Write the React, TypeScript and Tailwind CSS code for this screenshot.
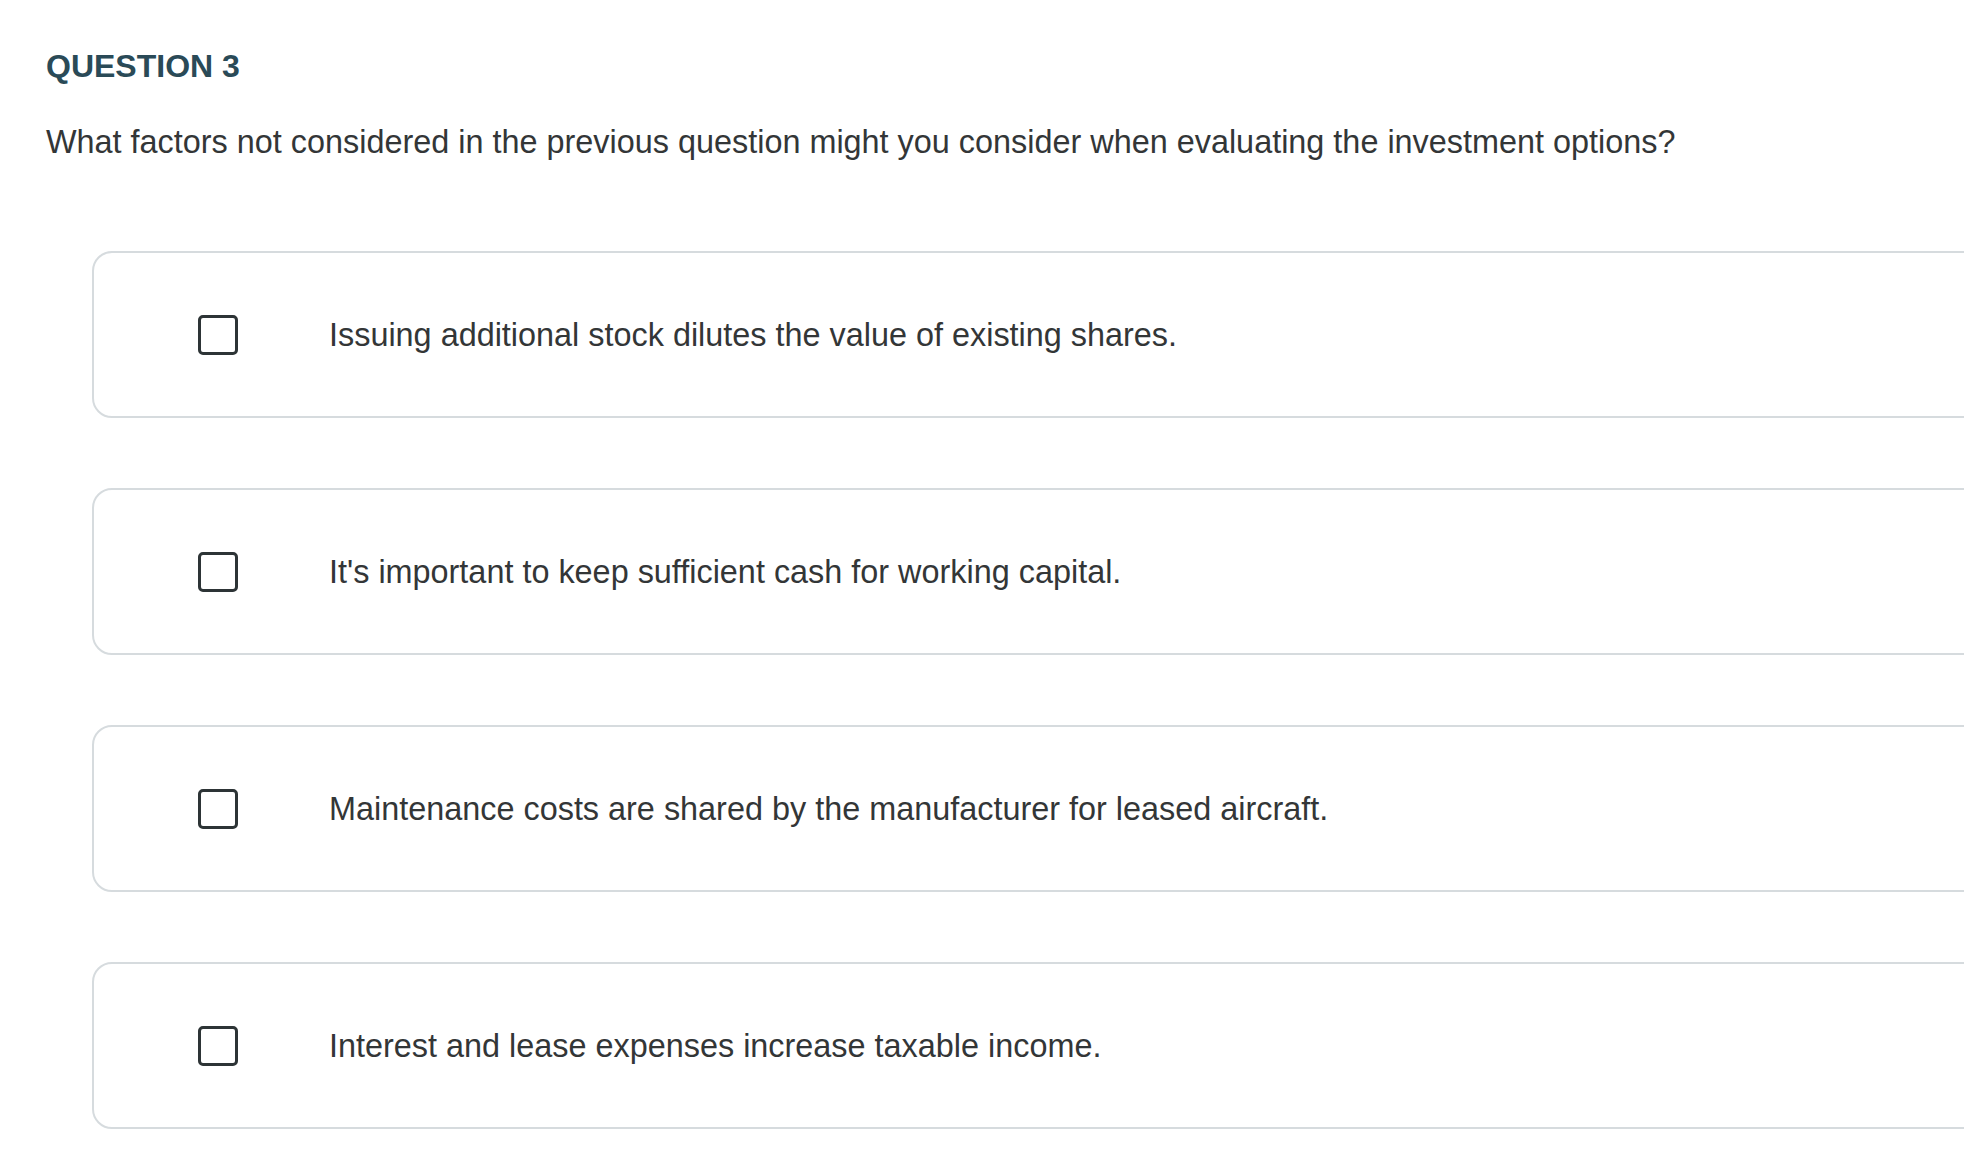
import React from "react";

const options: string[] = [
  "Issuing additional stock dilutes the value of existing shares.",
  "It's important to keep sufficient cash for working capital.",
  "Maintenance costs are shared by the manufacturer for leased aircraft.",
  "Interest and lease expenses increase taxable income.",
];

const App: React.FC = () => {
  return (
    <div
      className="h-screen w-full overflow-hidden bg-white px-[46px] pt-[48px]"
      style={{ fontFamily: '"Liberation Sans", Arial, Helvetica, sans-serif' }}
    >
      <h2 className="text-[32px] leading-[36px] font-bold text-[#2a4a57]">
        QUESTION 3
      </h2>
      <p className="mt-[40px] text-[32.4px] leading-[36px] text-[#333637] whitespace-nowrap">
        What factors not considered in the previous question might you consider
        when evaluating the investment options?
      </p>

      <div className="mt-[91px] ml-[46px] flex flex-col gap-[70px]">
        {options.map((text, i) => (
          <label
            key={i}
            className="flex h-[167px] w-[1900px] shrink-0 items-center rounded-[20px] border-2 border-[#d6dbde] bg-white pl-[104px]"
          >
            <span className="h-[40px] w-[40px] shrink-0 rounded-[5px] border-[3px] border-[#2d3436]" />
            <span className="ml-[91px] text-[32.4px] leading-[36px] text-[#333637] whitespace-nowrap">
              {text}
            </span>
          </label>
        ))}
      </div>
    </div>
  );
};

export default App;
